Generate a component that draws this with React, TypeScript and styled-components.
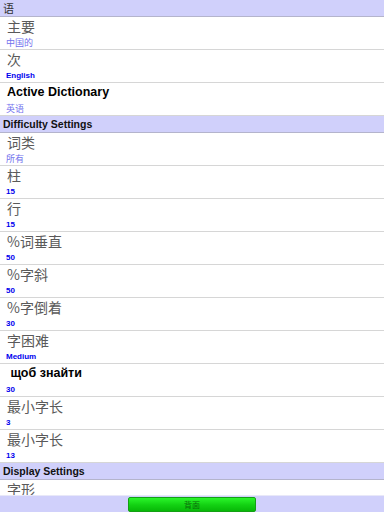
import React from 'react';
import styled, { createGlobalStyle } from 'styled-components';

const GlobalStyle = createGlobalStyle`
	html, body {
		margin: 0;
		padding: 0;
		background: #ffffff;
		font-family: "Liberation Sans", "Noto Sans CJK SC", sans-serif;
	}
`;

const Page = styled.div`
	width: 384px;
	padding-bottom: 17px;
`;

const SectionHeader = styled.div<{ $cjk?: boolean }>`
	height: 16px;
	line-height: 16px;
	padding-left: 3px;
	background: #d0d0fb;
	border-bottom: 1px solid #b4b4cc;
	font-size: ${(p) => (p.$cjk ? '11px' : '10.5px')};
	font-weight: ${(p) => (p.$cjk ? 'normal' : 'bold')};
	color: ${(p) => (p.$cjk ? '#333' : '#111')};
	font-family: ${(p) =>
		p.$cjk ? '"Noto Sans CJK SC", sans-serif' : '"Liberation Sans", sans-serif'};
	overflow: hidden;
`;

const Row = styled.div`
	height: 32px;
	border-bottom: 1px solid #d6d6d6;
	display: flex;
	flex-direction: column;
	padding-left: 7px;
	overflow: hidden;
`;

const Title = styled.div<{ $latin?: boolean }>`
	margin-top: 1px;
	height: 16px;
	line-height: 16px;
	font-size: ${(p) => (p.$latin ? '12.5px' : '14px')};
	font-weight: ${(p) => (p.$latin ? 'bold' : 'normal')};
	color: ${(p) => (p.$latin ? '#000' : '#5a5a5a')};
	font-family: ${(p) =>
		p.$latin
			? '"Liberation Sans", sans-serif'
			: '"Noto Sans CJK SC", sans-serif'};
	white-space: pre;
`;

const Sub = styled.div<{ $cjk?: boolean }>`
	margin-top: 4px;
	margin-left: -1px;
	height: 10px;
	line-height: 10px;
	font-size: ${(p) => (p.$cjk ? '9px' : '8px')};
	font-weight: ${(p) => (p.$cjk ? 'normal' : 'bold')};
	color: ${(p) => (p.$cjk ? '#7272ee' : '#0000ee')};
	font-family: ${(p) =>
		p.$cjk ? '"Noto Sans CJK SC", sans-serif' : '"Liberation Sans", sans-serif'};
`;

const BottomBar = styled.div`
	position: fixed;
	left: 0;
	right: 0;
	bottom: 0;
	height: 17px;
	background: #d0d0fb;
	border-top: 1px solid #e8e8f8;
	display: flex;
	align-items: center;
	padding-left: 128px;
	box-sizing: border-box;
`;

const GreenButton = styled.button`
	width: 128px;
	height: 15px;
	padding: 0;
	border: 1px solid #14a014;
	border-radius: 2px;
	background: linear-gradient(#2af52a, #12d012 55%, #08b808);
	color: #0a6a0a;
	font-size: 8px;
	font-family: "Noto Sans CJK SC", sans-serif;
	line-height: 13px;
`;

type Item = { title: string; sub: string; latin?: boolean };

const langItems: Item[] = [
	{ title: '主要', sub: '中国的' },
	{ title: '次', sub: 'English' },
	{ title: 'Active Dictionary', sub: '英语', latin: true },
];

const difficultyItems: Item[] = [
	{ title: '词类', sub: '所有' },
	{ title: '柱', sub: '15' },
	{ title: '行', sub: '15' },
	{ title: '%词垂直', sub: '50' },
	{ title: '%字斜', sub: '50' },
	{ title: '%字倒着', sub: '30' },
	{ title: '字困难', sub: 'Medium' },
	{ title: ' щоб знайти', sub: '30', latin: true },
	{ title: '最小字长', sub: '3' },
	{ title: '最小字长', sub: '13' },
];

const displayItems: Item[] = [{ title: '字形', sub: '默认' }];

const isCjk = (s: string) => /[\u4e00-\u9fff]/.test(s);

const Rows = ({ items }: { items: Item[] }) => (
	<>
		{items.map((it, i) => (
			<Row key={i}>
				<Title $latin={it.latin}>{it.title}</Title>
				<Sub $cjk={isCjk(it.sub)}>{it.sub}</Sub>
			</Row>
		))}
	</>
);

export default function App() {
	return (
		<Page>
			<GlobalStyle />
			<SectionHeader $cjk>语</SectionHeader>
			<Rows items={langItems} />
			<SectionHeader>Difficulty Settings</SectionHeader>
			<Rows items={difficultyItems} />
			<SectionHeader>Display Settings</SectionHeader>
			<Rows items={displayItems} />
			<BottomBar>
				<GreenButton>背面</GreenButton>
			</BottomBar>
		</Page>
	);
}
